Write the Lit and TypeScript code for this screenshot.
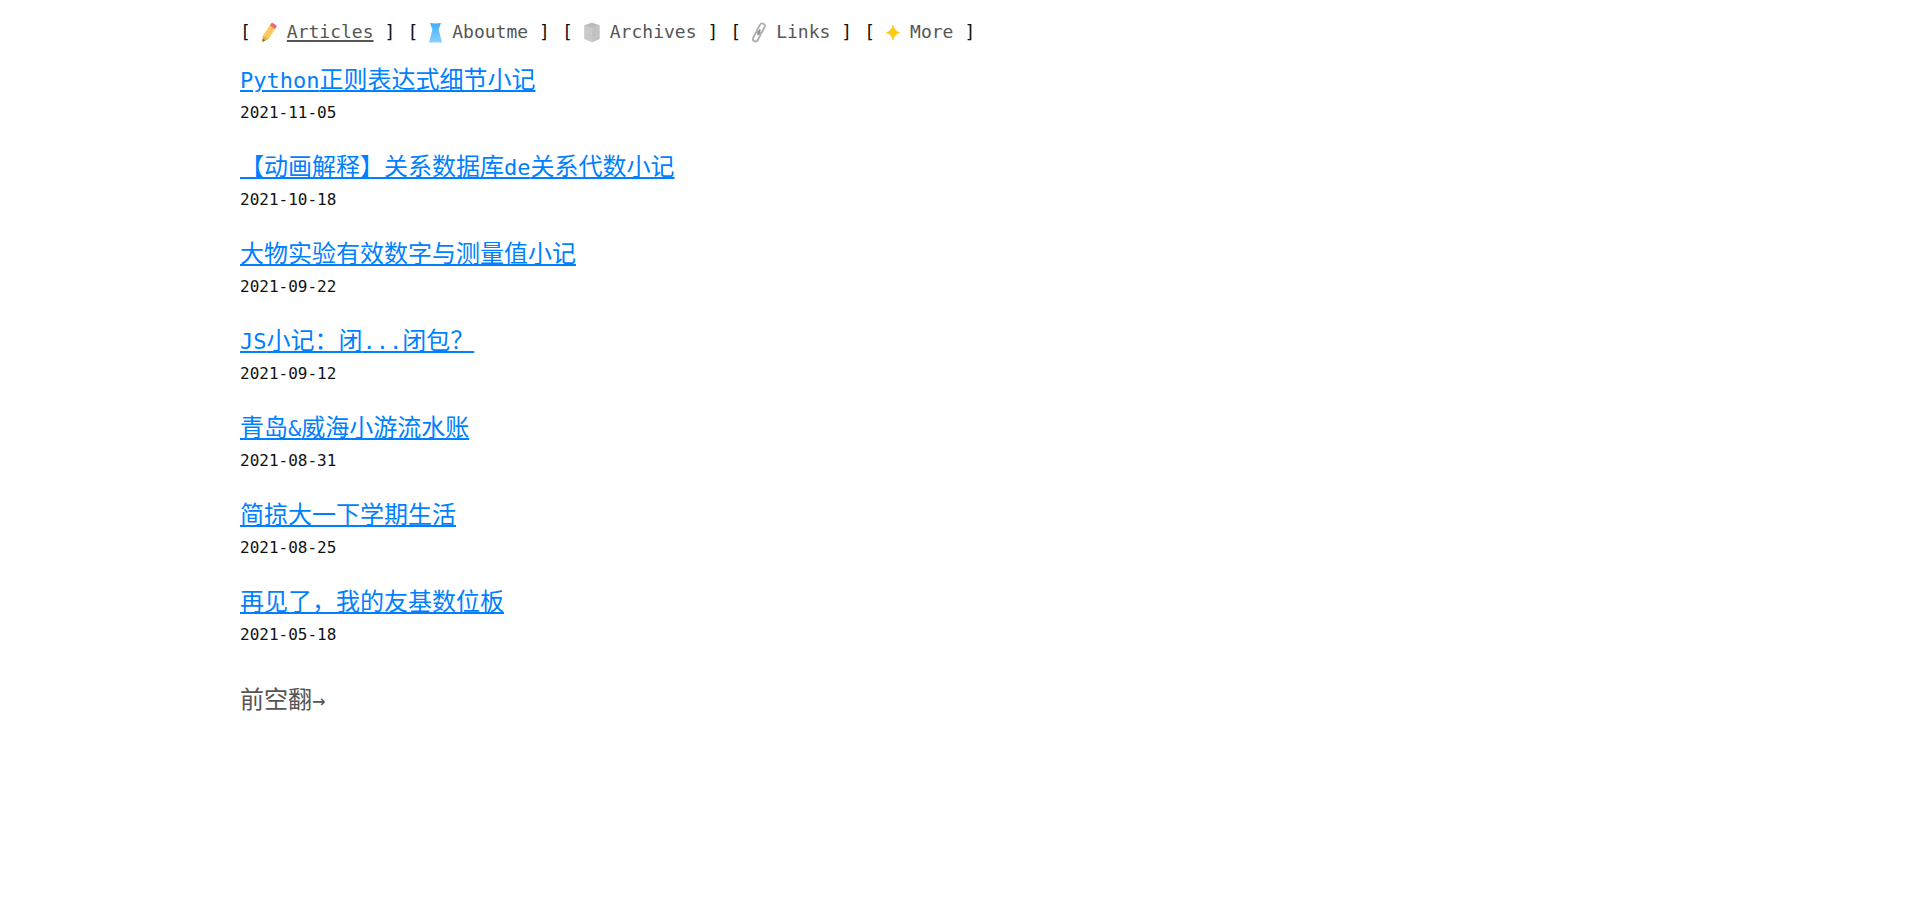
import { LitElement, html, css, svg } from "lit";
import { customElement } from "lit/decorators.js";

const pencil = html`<svg width="15" height="21" viewBox="0 0 15 21" aria-hidden="true">${svg`
  <path d="M.9 13.6 8.6 2.2 14 5.6 6.6 17.2 Z" fill="#fccb62"/>
  <path d="M4 15.2 11.6 4" stroke="#f7bd58" stroke-width="1"/>
  <path d="M.9 13.4 .4 19.8 6.7 17 Z" fill="#e6b23c"/>
  <path d="M.7 16.6 .4 20 3.4 18.6 Z" fill="#776a20"/>
  <path d="M7.8 3.6 9.2 1.3Q9.8.5 10.8 1.1L14.2 3.2Q15 3.9 14.5 4.8L13 7Z" fill="#ee6b70"/>
`}</svg>`;

const dress = html`<svg width="13" height="21" viewBox="0 0 13 21" aria-hidden="true">${svg`
  <defs><linearGradient id="d" x1="0" y1="0" x2="0" y2="1"><stop offset="0" stop-color="#42adfa"/><stop offset="1" stop-color="#8bd0ff"/></linearGradient></defs>
  <path d="M1 1 Q6.5 1.8 12 1 L9.6 7.6 L13 20.4 H0 L3.4 7.6 Z" fill="url(#d)"/>
`}</svg>`;

const box = html`<svg width="16" height="21" viewBox="0 0 16 21" aria-hidden="true">${svg`
  <path d="M8 .8 15.5 3.4V17L8 20.2 .2 17V3.4Z" fill="#cacaca"/>
  <path d="M8 .8 15.5 3.4 8 5.6 .2 3.4Z" fill="#bababa"/>
  <path d="M8 5.6 15.5 3.4V17L8 20.2Z" fill="#c2c2c2"/>
`}</svg>`;

const chain = html`<svg width="14" height="21" viewBox="0 0 14 21" aria-hidden="true">${svg`
  <g fill="none" stroke="#b0b0b0" stroke-width="1.9">
    <rect x="-2.6" y="-5.2" width="5.2" height="10.4" rx="2.6" transform="translate(9 6.4) rotate(27)"/>
    <rect x="-2.6" y="-5.2" width="5.2" height="10.4" rx="2.6" transform="translate(4.7 14.5) rotate(27)"/>
  </g>
  <path d="M8.2 7.5 5.8 13" stroke="#8c8c8c" stroke-width="1.7"/>
`}</svg>`;

const spark = html`<svg width="14" height="21" viewBox="0 0 14 21" aria-hidden="true">${svg`
  <path d="M7 3 Q8.4 9.4 14 10.6 Q8.4 11.8 7 18.2 Q5.6 11.8 0 10.6 Q5.6 9.4 7 3Z" fill="#fdca12" stroke="#fdca12" stroke-width=".6"/>
`}</svg>`;

const sections = [
  { icon: pencil, label: "Articles", current: true },
  { icon: dress, label: "Aboutme", current: false },
  { icon: box, label: "Archives", current: false },
  { icon: chain, label: "Links", current: false },
  { icon: spark, label: "More", current: false },
];

const posts = [
  { title: "Python正则表达式细节小记", date: "2021-11-05" },
  { title: "【动画解释】关系数据库de关系代数小记", date: "2021-10-18" },
  { title: "大物实验有效数字与测量值小记", date: "2021-09-22" },
  { title: "JS小记：闭...闭包？", date: "2021-09-12" },
  { title: "青岛&威海小游流水账", date: "2021-08-31" },
  { title: "简掠大一下学期生活", date: "2021-08-25" },
  { title: "再见了，我的友基数位板", date: "2021-05-18" },
];

// Wraps runs of ASCII so they can take the monospace face beside the Han text.
const mixed = (text: string) =>
  text
    .split(/([\x21-\x7e→]+)/)
    .filter(Boolean)
    .map((part) => (/^[\x21-\x7e→]/.test(part) ? html`<span class="latin">${part}</span>` : part));

@customElement("app-root")
export class AppRoot extends LitElement {
  static styles = css`
    :host {
      display: block;
      padding: 16px 12.5% 32px;
      background: #fff;
      color: #111;
      font-family: "DejaVu Sans Mono", "Noto Sans CJK SC", monospace;
    }
    ul {
      list-style: none;
      margin: 0;
      padding: 0;
    }
    a {
      text-decoration: none;
      color: #555;
    }
    .menu {
      display: flex;
      flex-wrap: wrap;
      gap: 0 12px;
      font-size: 18px;
      line-height: 32px;
    }
    .item {
      display: flex;
      gap: 11px;
      align-items: center;
    }
    .item a {
      display: flex;
      gap: 10px;
      align-items: center;
    }
    .current {
      text-decoration: underline;
      text-decoration-thickness: 2px;
      text-underline-offset: 2px;
    }
    .posts {
      display: grid;
      gap: 24px;
      margin-top: 14px;
    }
    .title,
    .next {
      margin: 0;
      font-family: "Noto Sans CJK SC", sans-serif;
      font-size: 24px;
      font-weight: 400;
      line-height: 32px;
    }
    .title a {
      color: #007fff;
      text-decoration: underline;
      text-decoration-thickness: 2px;
      text-underline-offset: 2px;
    }
    .latin {
      font-family: "DejaVu Sans Mono", monospace;
      font-size: 22px;
      line-height: 1;
    }
    time {
      display: block;
      margin-top: 7px;
      font-size: 16px;
      line-height: 24px;
    }
    .next {
      margin-top: 35px;
    }
  `;

  render() {
    return html`
      <nav>
        <ul class="menu">
          ${sections.map(
            (s) => html`<li class="item">
              <span>[</span>
              <a href="#">${s.icon}<span class=${s.current ? "current" : "label"}>${s.label}</span></a>
              <span>]</span>
            </li>`
          )}
        </ul>
      </nav>
      <main>
        <ul class="posts">
          ${posts.map(
            (p) => html`<li>
              <h2 class="title"><a href="#">${mixed(p.title)}</a></h2>
              <time datetime=${p.date}>${p.date}</time>
            </li>`
          )}
        </ul>
        <p class="next"><a href="#">${mixed("前空翻→")}</a></p>
      </main>
    `;
  }
}
